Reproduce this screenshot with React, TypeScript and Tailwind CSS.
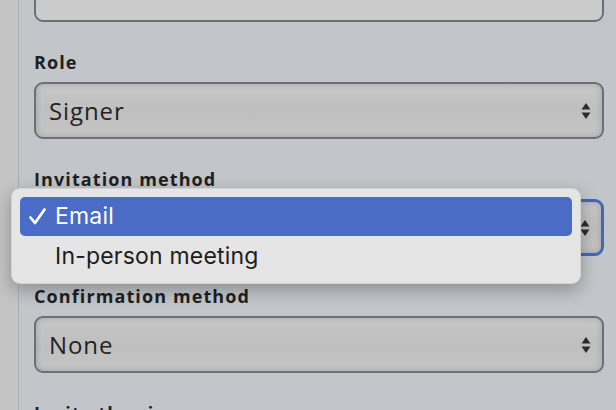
import { ReactNode } from 'react'

function Arrows() {
  return (
    <svg width="10" height="18" viewBox="0 0 10 18" className="shrink-0">
      <path d="M5 1 L9.5 7.5 H0.5 Z" fill="#2a2b2d" />
      <path d="M5 17 L9.5 10.5 H0.5 Z" fill="#2a2b2d" />
    </svg>
  )
}

function Select({ value, focused }: { value?: string; focused?: boolean }) {
  return (
    <div
      className={
        'flex items-center justify-between h-[57px] rounded-[9px] pl-[13px] pr-[11px] bg-gradient-to-b from-[#c7c7c7] via-[#bfbfbf] to-[#c4c4c4] shadow-[inset_0_0_6px_rgba(0,0,0,0.18)] ' +
        (focused ? 'border-[3px] border-[#4767b3]' : 'border-2 border-[#6c6f73]')
      }
    >
      <span
        className="text-[24px] text-[#232323] tracking-[0.9px]"
        style={{ fontFamily: '"Open Sans", "Noto Sans", sans-serif' }}
      >
        {value}
      </span>
      <Arrows />
    </div>
  )
}

function Field({ label, children }: { label: string; children: ReactNode }) {
  return (
    <div className="mt-[30px]">
      <div
        className="text-[18px] leading-[20px] font-bold text-[#1e1f21] tracking-[1.1px] mb-[10px]"
        style={{ fontFamily: '"Open Sans", "Noto Sans", sans-serif' }}
      >
        {label}
      </div>
      {children}
    </div>
  )
}

export default function App() {
  const menuFont = { fontFamily: 'Inter, Roboto, "Liberation Sans", sans-serif' }
  return (
    <div className="flex w-[616px] h-[410px] overflow-hidden bg-[#c2c5c9]">
      {/* 左侧边栏 */}
      <div className="w-[19px] shrink-0 bg-[#c4c4c5] border-r border-[#abadb0]" />

      <div className="flex-1 pl-[15px] pr-[12px]">
        {/* 上方被截断的输入框 */}
        <div className="mt-[-35px] h-[57px] rounded-[9px] border-2 border-[#6c6f73] bg-[#cbcbcb]" />

        <Field label="Role">
          <Select value="Signer" />
        </Field>

        <Field label="Invitation method">
          <div className="relative">
            <Select focused />
            {/* 下拉菜单 */}
            <div className="absolute left-[-23px] top-[-11px] w-[570px] h-[96px] rounded-[9px] bg-[#e5e5e5] border border-[#d2d2d2] shadow-[0_6px_18px_rgba(0,0,0,0.28)] p-[8px]">
              <div className="flex items-center h-[39px] rounded-[5px] bg-[#4a6cc6] text-white">
                <span className="w-[35px] pl-[9px] flex items-center">
                  <svg width="17" height="17" viewBox="0 0 17 17">
                    <path
                      d="M1.5 9.5 L6 15 L15.5 1.5"
                      fill="none"
                      stroke="white"
                      strokeWidth="2.7"
                      strokeLinecap="round"
                      strokeLinejoin="round"
                    />
                  </svg>
                </span>
                <span className="text-[23px] tracking-[0.2px]" style={menuFont}>
                  Email
                </span>
              </div>
              <div className="flex items-center h-[40px] text-[#1d1d1f]">
                <span className="w-[35px]" />
                <span className="text-[23px] tracking-[0.2px]" style={menuFont}>
                  In-person meeting
                </span>
              </div>
            </div>
          </div>
        </Field>

        <Field label="Confirmation method">
          <Select value="None" />
        </Field>

        <Field label="Invite the signer">
          <div />
        </Field>
      </div>
    </div>
  )
}
